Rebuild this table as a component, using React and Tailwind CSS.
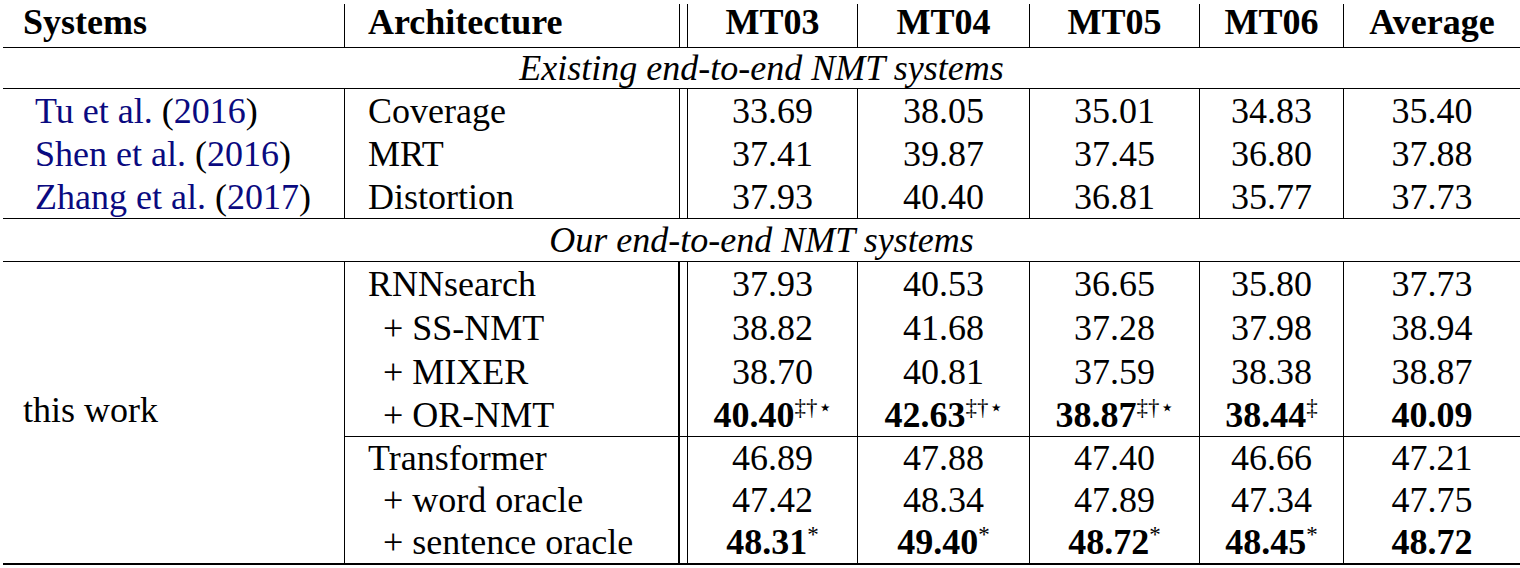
// Results table: NMT systems on MT03 to MT06, LaTeX-style ruled layout.
const F = 'font-[Liberation_Serif]'
const BLUE = 'text-[#0a0a80]'
const COLS = 'grid-cols-[342px_334px_9px_170px_172px_170px_144px_176px]'
const RCOLS = 'grid-cols-[334px_9px_170px_172px_170px_144px_176px]'
const MARKS = '\u2021\u2020\u22c6'

const EXISTING = [
  { name: 'Tu et al.', year: '2016', arch: 'Coverage', vals: ['33.69', '38.05', '35.01', '34.83', '35.40'], h: 'h-[43px]' },
  { name: 'Shen et al.', year: '2016', arch: 'MRT', vals: ['37.41', '39.87', '37.45', '36.80', '37.88'], h: 'h-[43px]' },
  { name: 'Zhang et al.', year: '2017', arch: 'Distortion', vals: ['37.93', '40.40', '36.81', '35.77', '37.73'], h: 'h-[44px]' },
]

const RNN = [
  { arch: 'RNNsearch', vals: [['37.93'], ['40.53'], ['36.65'], ['35.80'], ['37.73']], h: 'h-[44px]' },
  { arch: '+ SS-NMT', sub: true, vals: [['38.82'], ['41.68'], ['37.28'], ['37.98'], ['38.94']], h: 'h-[44px]' },
  { arch: '+ MIXER', sub: true, vals: [['38.70'], ['40.81'], ['37.59'], ['38.38'], ['38.87']], h: 'h-[44px]' },
  {
    arch: '+ OR-NMT',
    sub: true,
    bold: true,
    vals: [['40.40', MARKS], ['42.63', MARKS], ['38.87', MARKS], ['38.44', '\u2021'], ['40.09']],
    h: 'h-[43px]',
    line: true,
  },
]

const TRANSFORMER = [
  { arch: 'Transformer', vals: [['46.89'], ['47.88'], ['47.40'], ['46.66'], ['47.21']], h: 'h-[42px]' },
  { arch: '+ word oracle', sub: true, vals: [['47.42'], ['48.34'], ['47.89'], ['47.34'], ['47.75']], h: 'h-[42px]' },
  {
    arch: '+ sentence oracle',
    sub: true,
    bold: true,
    vals: [['48.31', '*'], ['49.40', '*'], ['48.72', '*'], ['48.45', '*'], ['48.72']],
    h: 'h-[42px]',
  },
]

const HEADERS = ['MT03', 'MT04', 'MT05', 'MT06', 'Average']

function NumCells({ vals, bold }) {
  return vals.map((v, i) => (
    <div
      key={i}
      className={`flex items-center justify-center whitespace-nowrap ${i < vals.length - 1 ? 'border-r border-black' : ''}`}
    >
      <span className={`${F} ${bold ? 'font-bold' : ''}`}>{v[0]}</span>
      {v[1] && <span className={`${F} -mt-[15px] text-[23px]`}>{v[1]}</span>}
    </div>
  ))
}

function OurRow({ r }) {
  return (
    <div className={`grid ${RCOLS} ${r.h} ${r.line ? 'border-b border-black' : ''}`}>
      <div className={`flex items-center border-r border-black whitespace-nowrap ${r.sub ? 'pl-[38px]' : 'pl-[23px]'}`}>
        <span className={F}>{r.arch}</span>
      </div>
      <div className="border-x border-black" />
      <NumCells vals={r.vals} bold={r.bold} />
    </div>
  )
}

export default function App() {
  return (
    <div className="h-[568px] w-[1520px] overflow-hidden bg-white font-serif">
      <div className="ml-[3px] w-[1517px] text-[36px] leading-none text-black font-[Liberation_Serif]">
        {/* header */}
        <div className={`grid ${COLS} h-[48px] items-end border-b border-black font-bold`}>
          <div className="flex h-[43px] items-center border-r border-black pb-[8px] pl-[20px]">
            <span className={F}>Systems</span>
          </div>
          <div className="flex h-[43px] items-center pb-[8px] pl-[23px]">
            <span className={F}>Architecture</span>
          </div>
          <div className="h-[43px] border-x border-black" />
          {HEADERS.map((h, i) => (
            <div
              key={h}
              className={`flex h-[43px] items-center justify-center pb-[8px] ${i < HEADERS.length - 1 ? 'border-r border-black' : ''}`}
            >
              <span className={F}>{h}</span>
            </div>
          ))}
        </div>

        <div className="flex h-[41px] items-center justify-center border-b border-black italic">
          <span className={F}>Existing end-to-end NMT systems</span>
        </div>

        {EXISTING.map((r, idx) => (
          <div
            key={r.name}
            className={`grid ${COLS} ${r.h} ${idx === EXISTING.length - 1 ? 'border-b border-black' : ''}`}
          >
            <div className="flex items-center border-r border-black pl-[32px] whitespace-nowrap">
              <span className={`${F} ${BLUE}`}>{r.name}</span>
              <span className={`${F} ml-[9px]`}>(</span>
              <span className={`${F} ${BLUE}`}>{r.year}</span>
              <span className={F}>)</span>
            </div>
            <div className="flex items-center pl-[23px]">
              <span className={F}>{r.arch}</span>
            </div>
            <div className="border-x border-black" />
            <NumCells vals={r.vals.map((v) => [v])} />
          </div>
        ))}

        <div className="flex h-[43px] items-center justify-center border-b border-black italic">
          <span className={F}>Our end-to-end NMT systems</span>
        </div>

        <div className="flex border-b-2 border-black">
          <div className="flex w-[342px] shrink-0 items-center border-r border-black pb-[6px] pl-[20px]">
            <span className={F}>this work</span>
          </div>
          <div className="flex-1">
            {RNN.map((r) => (
              <OurRow key={r.arch} r={r} />
            ))}
            {TRANSFORMER.map((r) => (
              <OurRow key={r.arch} r={r} />
            ))}
          </div>
        </div>
      </div>
    </div>
  )
}
